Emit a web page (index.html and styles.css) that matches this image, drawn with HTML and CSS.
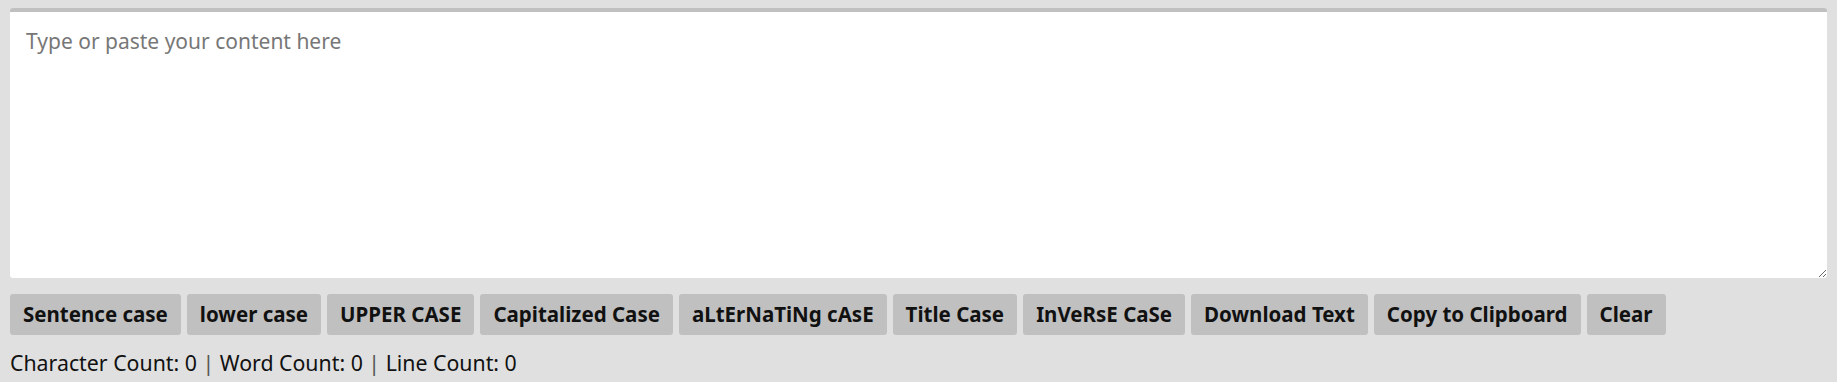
FILE: index.html
```html
<!DOCTYPE html>
<html lang="en">
<head>
<meta charset="utf-8">
<title>Case Converter</title>
<link rel="stylesheet" href="styles.css">
</head>
<body>
<main class="tool">
  <textarea class="editor" placeholder="Type or paste your content here"></textarea>
  <div class="actions">
    <button class="btn" type="button">Sentence case</button>
    <button class="btn" type="button">lower case</button>
    <button class="btn" type="button">UPPER CASE</button>
    <button class="btn" type="button">Capitalized Case</button>
    <button class="btn" type="button">aLtErNaTiNg cAsE</button>
    <button class="btn" type="button">Title Case</button>
    <button class="btn" type="button">InVeRsE CaSe</button>
    <button class="btn" type="button">Download Text</button>
    <button class="btn" type="button">Copy to Clipboard</button>
    <button class="btn" type="button">Clear</button>
  </div>
  <p class="stats">Character Count: 0 <span class="sep">|</span> Word Count: 0 <span class="sep">|</span> Line Count: 0</p>
</main>
</body>
</html>
```

FILE: styles.css
```css
html, body {
  margin: 0;
  padding: 0;
  background: #e0e0e0;
}

body {
  font-family: "Noto Sans", "DejaVu Sans", sans-serif;
  color: #111111;
}

.tool {
  padding: 8px 10px 0 10px;
  display: flex;
  flex-direction: column;
}

.editor {
  display: block;
  box-sizing: border-box;
  width: 100%;
  height: 270px;
  margin: 0;
  padding: 15px 16px;
  border: none;
  border-top: 4px solid #c0c0c0;
  border-radius: 3px;
  background: #ffffff;
  font-family: "Noto Sans", "DejaVu Sans", sans-serif;
  font-size: 21px;
  line-height: 28px;
  color: #111111;
  resize: both;
  outline: none;
}

.editor::placeholder {
  color: #777777;
}

.actions {
  display: flex;
  flex-wrap: wrap;
  gap: 6px;
  margin-top: 16px;
}

.btn {
  box-sizing: border-box;
  height: 41px;
  padding: 0 13px;
  border: none;
  border-radius: 3px;
  background: #c0c0c0;
  color: #111111;
  font-family: "Noto Sans", "DejaVu Sans", sans-serif;
  font-size: 20.5px;
  font-weight: 700;
  line-height: 41px;
  cursor: pointer;
}

.stats {
  margin: 14px 0 0 0;
  font-size: 21.3px;
  line-height: 28px;
  color: #111111;
}

.sep {
  color: #555555;
}
```
